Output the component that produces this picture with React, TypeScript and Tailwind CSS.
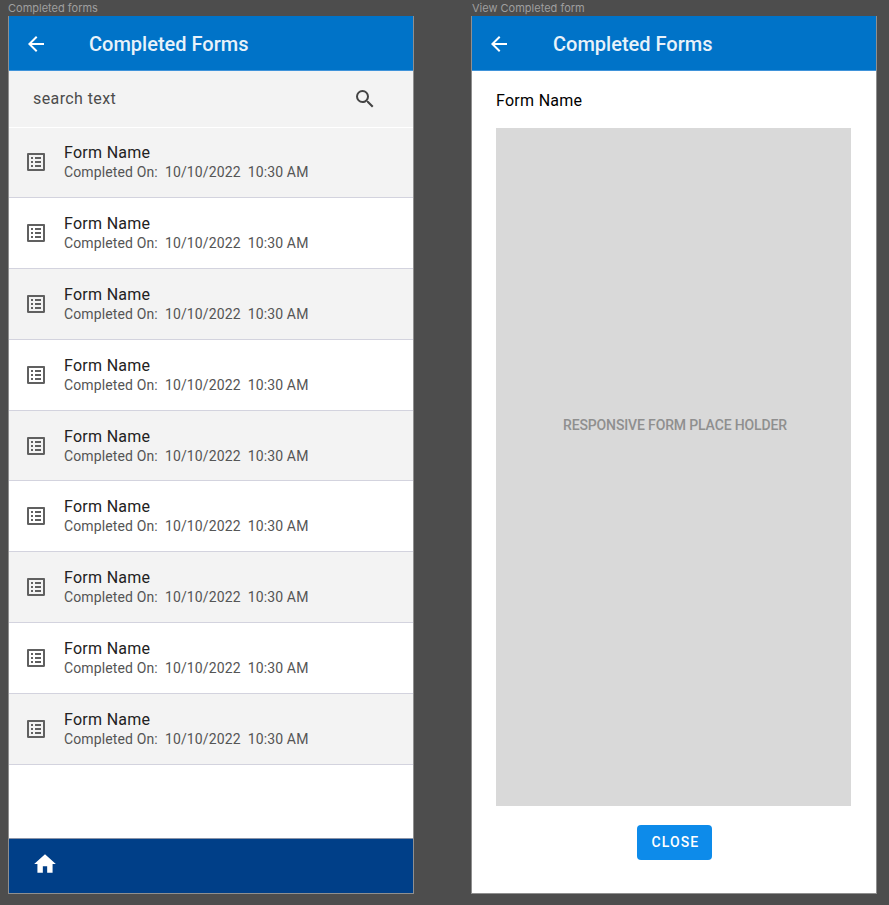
import { MdArrowBack, MdHome, MdOutlineListAlt, MdSearch } from 'react-icons/md'

const rows = Array.from({ length: 9 }, (_, i) => i)

function Header({ wide }: { wide?: boolean }) {
  return (
    <div className="flex h-[55px] shrink-0 items-center border-b border-[#3f93da] bg-[#0073c8] pt-[2px] text-[#e8f2fa]">
      <MdArrowBack className="ml-[15px] shrink-0 text-white" size={24} />
      <h1 className={`${wide ? 'ml-[42px]' : 'ml-[41px]'} text-[20px] leading-none font-medium`}>Completed Forms</h1>
    </div>
  )
}

function FormRow({ shaded }: { shaded: boolean }) {
  return (
    <div className={`flex h-[70.8px] shrink-0 items-center border-b border-[#d3d3de] ${shaded ? 'bg-[#f3f3f3]' : 'bg-white'}`}>
      <MdOutlineListAlt className="ml-[15px] shrink-0 text-[#606060]" size={24} />
      <div className="ml-[16px] flex flex-col pt-[1px]">
        <span className="text-[16px] leading-[20px] tracking-[0.28px] text-[#222222]">Form Name</span>
        <span className="-mt-[1px] text-[14px] leading-[20px] tracking-[0.12px] whitespace-pre text-[#555555]">
          Completed On:  10/10/2022  10:30 AM
        </span>
      </div>
    </div>
  )
}

function ListFrame() {
  return (
    <div className="flex h-[878px] w-[406px] flex-col border-x border-b border-[#8f8f8f] bg-white">
      <Header />
      <div className="flex h-[56.5px] shrink-0 items-center justify-between border-b border-white bg-[#f3f3f3] pr-[36px] pl-[24px]">
        <span className="text-[16px] tracking-[0.4px] text-[#4c4c4c]">search text</span>
        <MdSearch className="text-[#444444]" size={24} />
      </div>
      <div className="flex flex-1 flex-col">
        {rows.map(i => (
          <FormRow key={i} shaded={i % 2 === 0} />
        ))}
      </div>
      <div className="flex h-[55px] shrink-0 items-center border-t border-[#8a94a8] bg-[#003f88] pb-[4px] pl-[23px]">
        <MdHome className="text-white" size={26} />
      </div>
    </div>
  )
}

function ViewFrame() {
  return (
    <div className="flex h-[878px] w-[406px] flex-col border-x border-b border-[#8f8f8f] bg-white">
      <Header wide />
      <div className="flex flex-1 flex-col pr-[25px] pl-[24px]">
        <p className="mt-[20px] text-[16px] leading-[20px] tracking-[0.28px] text-black">Form Name</p>
        <div className="mt-[17px] flex h-[678px] items-center justify-center bg-[#d9d9d9] pb-[84px] pl-[3px]">
          <span className="text-[14px] font-medium tracking-[-0.14px] text-[#8f8f8f]">RESPONSIVE FORM PLACE HOLDER</span>
        </div>
        <button className="mt-[19px] ml-[141px] h-[35px] w-[75px] rounded-[4px] bg-[#0d8bea] pl-[2px] text-[14px] font-medium tracking-[1.1px] text-white">
          CLOSE
        </button>
      </div>
    </div>
  )
}

export default function App() {
  return (
    <div className="flex h-[905px] w-[889px] gap-[57px] bg-[#4d4d4d] pl-[8px] font-['Roboto',sans-serif]">
      <div className="flex flex-col">
        <span className="h-[16px] font-['Inter',sans-serif] text-[11px] leading-[17px] text-[#9f9f9f]">Completed forms</span>
        <ListFrame />
      </div>
      <div className="flex flex-col">
        <span className="h-[16px] pl-[1px] font-['Inter',sans-serif] text-[11px] leading-[17px] text-[#9f9f9f]">View Completed form</span>
        <ViewFrame />
      </div>
    </div>
  )
}
